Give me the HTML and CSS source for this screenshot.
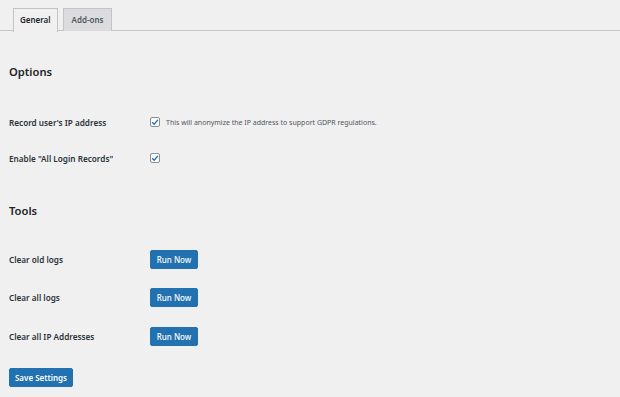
FILE: index.html
```html
<!DOCTYPE html>
<html lang="en">
<head>
    <meta charset="UTF-8">
    <meta name="viewport" content="width=device-width, initial-scale=1.0">
    <title>Settings</title>
    <link rel="stylesheet" href="styles.css">
</head>
<body>
    <nav class="tabs">
        <a class="tab active">General</a>
        <a class="tab addons">Add-ons</a>
    </nav>

    <div class="wrap">
        <h2 class="section-title">Options</h2>

        <div class="option-rows">
            <div class="row">
                <div class="label">Record user's IP address</div>
                <div class="field">
                    <span class="checkbox">
                        <svg viewBox="0 0 10 10" width="10" height="10"><path d="M2.2 5.2 L4.2 7.2 L7.9 2.9" fill="none" stroke="#2271b1" stroke-width="1.4"/></svg>
                    </span>
                    <span class="desc">This will anonymize the IP address to support GDPR regulations.</span>
                </div>
            </div>
            <div class="row">
                <div class="label">Enable "All Login Records"</div>
                <div class="field">
                    <span class="checkbox">
                        <svg viewBox="0 0 10 10" width="10" height="10"><path d="M2.2 5.2 L4.2 7.2 L7.9 2.9" fill="none" stroke="#2271b1" stroke-width="1.4"/></svg>
                    </span>
                </div>
            </div>
        </div>

        <h2 class="section-title tools">Tools</h2>

        <div class="tool-rows">
            <div class="row tool">
                <div class="label">Clear old logs</div>
                <div class="field"><button class="button">Run Now</button></div>
            </div>
            <div class="row tool">
                <div class="label">Clear all logs</div>
                <div class="field"><button class="button">Run Now</button></div>
            </div>
            <div class="row tool">
                <div class="label">Clear all IP Addresses</div>
                <div class="field"><button class="button">Run Now</button></div>
            </div>
        </div>

        <button class="button save">Save Settings</button>
    </div>
</body>
</html>
```

FILE: styles.css
```css
body {
    margin: 0;
    background-color: #f0f0f1;
    color: #1d2327;
    font-family: "Noto Sans", "Open Sans", sans-serif;
}
.tabs {
    display: flex;
    gap: 5px;
    padding: 8px 0 0 13px;
    border-bottom: 1px solid #c3c4c7;
    height: 22px;
}
.tab {
    display: block;
    line-height: 22px;
    padding: 0 6px;
    font-size: 8px;
    font-weight: 600;
    color: #50575e;
    background-color: #dcdcde;
    border: 1px solid #c3c4c7;
    border-bottom: none;
    box-sizing: border-box;
    height: 23px;
}
.tab.addons {
    padding: 0 8px;
}
.tab.active {
    background-color: #f0f0f1;
    color: #1d2327;
    height: 24px;
    margin-bottom: -1px;
}
.wrap {
    padding-left: 9px;
}
.section-title {
    margin: 33px 0 0;
    font-size: 11.2px;
    line-height: 16px;
    font-weight: 600;
}
.section-title.tools {
    margin-top: 27px;
}
.option-rows {
    margin-top: 24px;
}
.tool-rows {
    margin-top: 21px;
}
.row {
    display: flex;
    align-items: center;
    height: 36px;
}
.row.tool {
    height: 38.5px;
}
.label {
    width: 141px;
    font-size: 8.2px;
    font-weight: 600;
    color: #2c3338;
}
.field {
    display: flex;
    align-items: center;
    gap: 6px;
}
.checkbox {
    width: 10px;
    height: 10px;
    box-sizing: border-box;
    border: 1px solid #8c8f94;
    border-radius: 2px;
    background: #fff;
    display: flex;
    align-items: center;
    justify-content: center;
}
.checkbox svg {
    flex: none;
}
.desc {
    font-size: 7px;
    color: #50575e;
}
.button {
    height: 19px;
    width: 48px;
    padding: 0;
    background-color: #2271b1;
    color: #fff;
    border: 1px solid #2271b1;
    border-radius: 2px;
    font-family: inherit;
    font-size: 8px;
    font-weight: 500;
    white-space: nowrap;
    cursor: pointer;
}
.button.save {
    margin-top: 12px;
    width: 64px;
    font-weight: 600;
}
```
